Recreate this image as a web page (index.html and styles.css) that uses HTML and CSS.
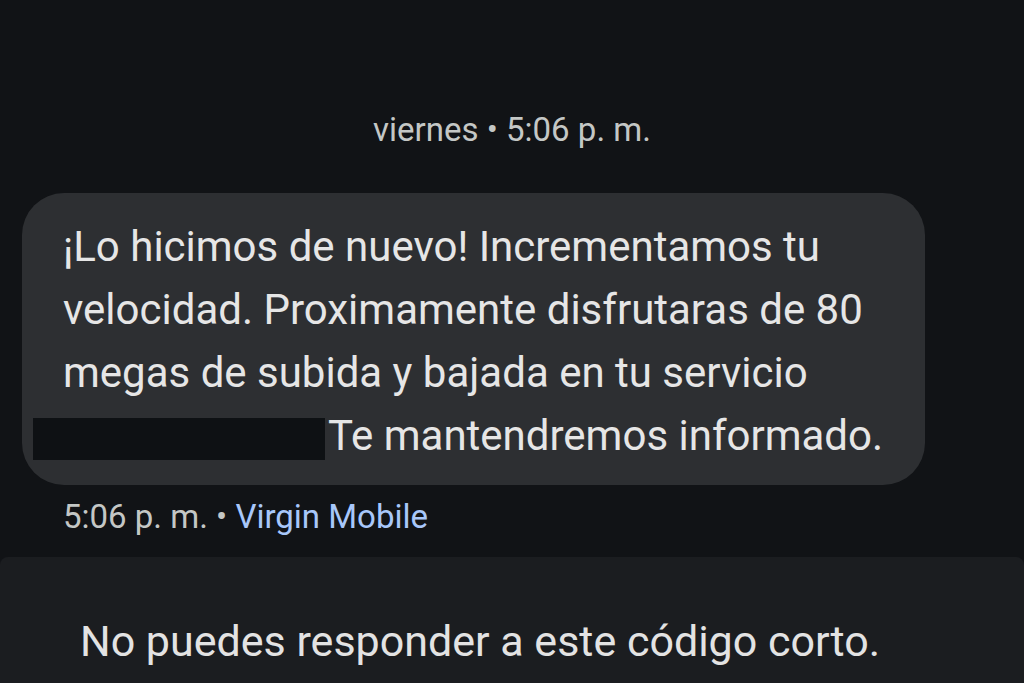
FILE: index.html
```html
<!DOCTYPE html>
<html lang="es">
<head>
<meta charset="utf-8">
<link rel="stylesheet" href="styles.css">
</head>
<body>
<main class="thread">
  <div class="day">viernes • 5:06 p. m.</div>
  <div class="bubble">
    <p class="msg">¡Lo hicimos de nuevo! Incrementamos tu velocidad. Proximamente disfrutaras de 80 megas de subida y bajada en tu servicio <span class="redact"></span>Te mantendremos informado.</p>
  </div>
  <div class="meta">5:06 p. m. • <span class="sender">Virgin Mobile</span></div>
</main>
<footer class="noreply">No puedes responder a este código corto.</footer>
</body>
</html>
```
FILE: styles.css
```css
html, body {
  margin: 0;
  padding: 0;
  background: #111316;
  height: 683px;
  overflow: hidden;
}
body {
  font-family: Roboto, "Open Sans", sans-serif;
  color: #e3e3e3;
  display: flex;
  flex-direction: column;
}
.thread {
  height: 557px;
  box-sizing: border-box;
  padding-top: 110px;
}
.day {
  text-align: center;
  font-size: 33px;
  line-height: 40px;
  color: #c4c7c5;
}
.bubble {
  margin: 43px 0 0 22px;
  width: 903px;
  height: 292px;
  box-sizing: border-box;
  background: #2d2f32;
  border-radius: 42px;
  padding: 22px 20px 0 41px;
}
.msg {
  margin: 0;
  font-size: 42px;
  line-height: 63px;
  color: #e6e6e6;
}
.redact {
  display: inline-block;
  width: 292px;
  height: 42px;
  margin-left: -30px;
  margin-right: 3px;
  background: #0e1114;
  vertical-align: -10px;
}
.meta {
  margin: 12px 0 0 63px;
  font-size: 33px;
  line-height: 40px;
  color: #c4c7c5;
}
.sender {
  color: #a8c7fa;
}
.noreply {
  flex: 1;
  background: #1b1d20;
  border-radius: 8px 8px 0 0;
  font-size: 43px;
  line-height: 48px;
  padding: 60px 0 0 80px;
  color: #e3e3e3;
}
```
